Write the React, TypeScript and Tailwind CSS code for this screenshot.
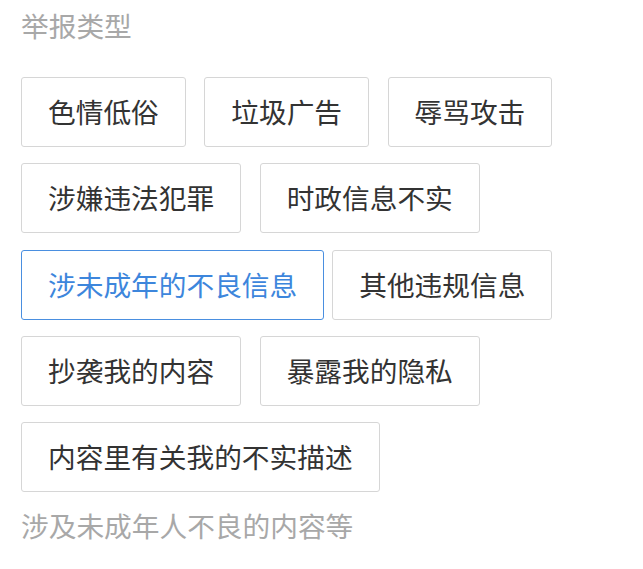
import { useState } from 'react';

const rows: { items: string[]; gap: string }[] = [
  { items: ['色情低俗', '垃圾广告', '辱骂攻击'], gap: 'gap-[18.5px]' },
  { items: ['涉嫌违法犯罪', '时政信息不实'], gap: 'gap-[18.5px]' },
  { items: ['涉未成年的不良信息', '其他违规信息'], gap: 'gap-[8px]' },
  { items: ['抄袭我的内容', '暴露我的隐私'], gap: 'gap-[18.5px]' },
  { items: ['内容里有关我的不实描述'], gap: 'gap-[18.5px]' },
];

const fontStack = { fontFamily: "'Noto Sans CJK SC', 'Noto Sans', sans-serif" };

export default function App() {
  const [selected, setSelected] = useState('涉未成年的不良信息');

  return (
    <div className="w-[643px] h-[569px] bg-white pl-[21px] pt-[11px]" style={fontStack}>
      {/* 标题 */}
      <div className="text-[27.7px] leading-[28px] text-[#a8a8a8]">举报类型</div>

      {/* 类型按钮 */}
      <div className="mt-[38px] flex flex-col gap-[16.25px]">
        {rows.map((row, i) => (
          <div key={i} className={`flex ${row.gap}`}>
            {row.items.map((label) => {
              const active = label === selected;
              return (
                <button
                  key={label}
                  onClick={() => setSelected(label)}
                  className={
                    active
                      ? 'h-[70px] px-[26px] rounded-[3px] border border-[#4a8fe0] text-[#3d86dc] text-[27.7px] leading-none bg-white whitespace-nowrap'
                      : 'h-[70px] px-[26px] rounded-[3px] border border-[#d6d6d6] text-[#333333] text-[27.7px] leading-none bg-white whitespace-nowrap'
                  }
                >
                  {label}
                </button>
              );
            })}
          </div>
        ))}
      </div>

      {/* 提示 */}
      <div className="mt-[19px] text-[27.7px] leading-[28px] text-[#a8a8a8]">涉及未成年人不良的内容等</div>
    </div>
  );
}
